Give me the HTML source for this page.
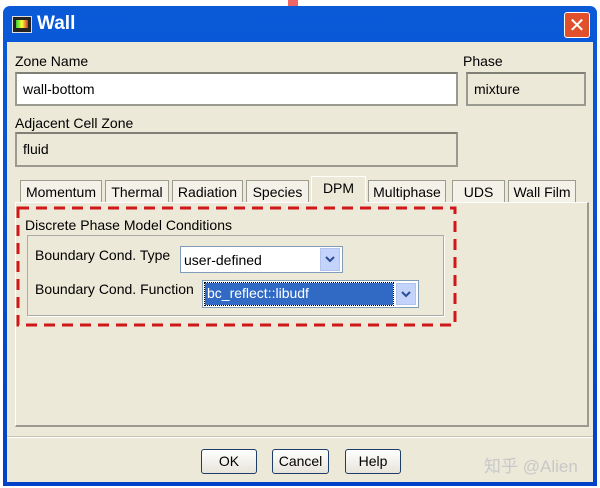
<!DOCTYPE html><html><head><style>
body{margin:0;width:600px;height:488px;background:#fff;position:relative;overflow:hidden;font-family:"Liberation Sans",sans-serif;font-size:14px;color:#000}
.a{position:absolute}
.win{left:3px;top:6px;width:594px;height:480px;background:linear-gradient(#0a5ad8,#0042c8);border-radius:7px 7px 0 0}
.body{left:7px;top:42px;width:586px;height:440px;background:#ECE9D8}
.box{border:2px solid #9a9a90;border-top-color:#7f7f76;background:#ECE9D8;box-sizing:border-box;padding:7px 6px}
.tab{top:180px;height:22px;border:1px solid #9b9b90;border-bottom:none;background:#f4f2e8;box-sizing:border-box;text-align:center;line-height:22px;font-size:14px}
.btn{top:449px;height:25px;border:1px solid #1f3d6a;border-radius:3px;background:linear-gradient(#fff,#e6e4da);box-sizing:border-box;text-align:center;line-height:23px}
.arr{background:#c3d3fa;border:1px solid #b0c4ef;box-sizing:border-box}
</style></head><body>
<div class="a" style="left:288px;top:0;width:10px;height:6px;background:#e66"></div>
<div class="a win"></div>
<div class="a" style="left:12px;top:16px;width:18px;height:15px;background:#222;border:1px solid #ddd"><div style="margin:3px;height:8px;background:linear-gradient(90deg,#3c3,#ff3,#c33)"></div></div>
<div class="a" style="left:37px;top:13px;color:#fff;font-weight:bold;font-size:19px">Wall</div>
<div class="a" style="left:564px;top:12px;width:26px;height:26px;border:1px solid #fff;border-radius:3px;background:#e0502a;color:#fff;font-size:20px;line-height:26px;text-align:center;box-sizing:border-box">✕</div>
<div class="a body"></div>
<div class="a" style="left:15px;top:53px">Zone Name</div>
<div class="a box" style="left:15px;top:72px;width:443px;height:34px;background:#fff">wall-bottom</div>
<div class="a" style="left:463px;top:53px">Phase</div>
<div class="a box" style="left:466px;top:72px;width:120px;height:34px">mixture</div>
<div class="a" style="left:15px;top:115px">Adjacent Cell Zone</div>
<div class="a box" style="left:15px;top:132px;width:443px;height:35px">fluid</div>
<div class="a" style="left:15px;top:202px;width:574px;height:225px;border:1px solid #fff;border-right:2px solid #9b9b90;border-bottom:2px solid #9b9b90;box-sizing:border-box"></div>
<div class="a tab" style="left:20px;width:82px">Momentum</div>
<div class="a tab" style="left:105px;width:64px">Thermal</div>
<div class="a tab" style="left:172px;width:71px">Radiation</div>
<div class="a tab" style="left:246px;width:63px">Species</div>
<div class="a tab" style="left:311px;top:176px;height:27px;width:55px;background:#ECE9D8;border-color:#fff">DPM</div>
<div class="a tab" style="left:368px;width:78px">Multiphase</div>
<div class="a tab" style="left:452px;width:53px">UDS</div>
<div class="a tab" style="left:508px;width:68px">Wall Film</div>
<div class="a" style="left:25px;top:217px">Discrete Phase Model Conditions</div>
<div class="a" style="left:27px;top:235px;width:415px;height:79px;border:1px solid #aaa;box-shadow:1px 1px 0 #fff"></div>
<div class="a" style="left:35px;top:247px">Boundary Cond. Type</div>
<div class="a" style="left:180px;top:246px;width:163px;height:27px;background:#fff;border:1px solid #7f9db9;box-sizing:border-box;padding:5px 3px">user-defined</div>
<div class="a arr" style="left:320px;top:248px;width:20px;height:23px"><svg width="18" height="21"><path d="M5 8l4 4 4-4" fill="none" stroke="#2a4d9a" stroke-width="2"/></svg></div>
<div class="a" style="left:35px;top:281px">Boundary Cond. Function</div>
<div class="a" style="left:202px;top:280px;width:217px;height:28px;background:#fff;border:1px solid #7f9db9;box-sizing:border-box"></div>
<div class="a" style="left:205px;top:283px;width:188px;height:22px;background:#316ac5;color:#fff;outline:1px dotted #000;line-height:21px;padding-left:2px;box-sizing:border-box">bc_reflect::libudf</div>
<div class="a arr" style="left:396px;top:283px;width:20px;height:22px"><svg width="18" height="20"><path d="M5 8l4 4 4-4" fill="none" stroke="#2a4d9a" stroke-width="2"/></svg></div>
<svg class="a" style="left:16px;top:206px" width="442" height="122"><rect x="2" y="2" width="437" height="117" fill="none" stroke="#d01818" stroke-width="3" stroke-dasharray="11,7"/></svg>
<div class="a" style="left:7px;top:436px;width:586px;height:1px;background:#c8c4b0;border-bottom:1px solid #fff"></div>
<div class="a btn" style="left:201px;width:56px">OK</div>
<div class="a btn" style="left:272px;width:57px">Cancel</div>
<div class="a btn" style="left:345px;width:56px">Help</div>
<div class="a" style="left:484px;top:452px;color:#c8c8c8;font-size:17px;font-family:'Liberation Sans','Noto Sans CJK SC',sans-serif">知乎 @Alien</div>
</body></html>
